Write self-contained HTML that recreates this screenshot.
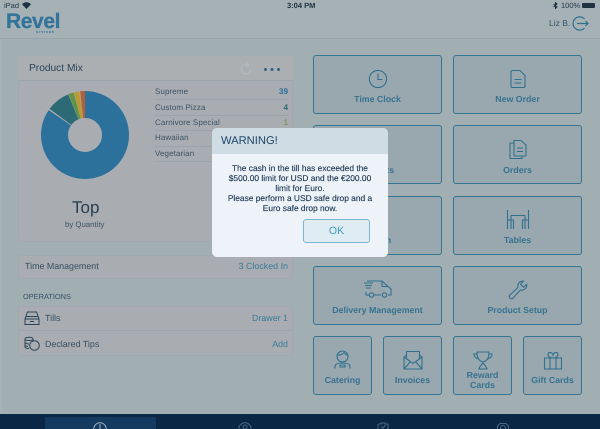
<!DOCTYPE html>
<html><head><meta charset="utf-8">
<style>
html,body{margin:0;padding:0}
body{width:600px;height:429px;overflow:hidden;position:relative;background:#a1afb3;font-family:"Liberation Sans",sans-serif;color:#2c4a63;text-rendering:geometricPrecision}
#w{position:absolute;left:0;top:0;width:600px;height:429px}
.a{position:absolute;white-space:nowrap}
.b{position:absolute;box-sizing:border-box;border:1.3px solid #367493;border-radius:3px;background:#99a8ae;color:#377291;font-size:8.8px;font-weight:bold;text-align:center}
.b span{position:absolute;left:0;right:0;line-height:10px}
.b svg{position:absolute;left:50%;fill:none;stroke:#31708f;stroke-width:1.1}
.card{position:absolute;box-sizing:border-box;background:#a9adb1;border:1px solid #a0a9ae;border-radius:3px}
.r{font-size:8px;color:#3b5366;letter-spacing:.1px}
.v{position:absolute;text-align:right;white-space:nowrap}
.hl{position:absolute;left:155px;width:134px;height:1px;background:#9aa4a9}
</style></head><body><div id="w">
<div class="a" style="left:0;top:0;width:600px;height:38px;background:#a5b1b5;border-bottom:1px solid #97a5aa"></div>
<div class="a" style="left:0;top:39px;width:2px;height:375px;background:#a6b2b6"></div>
<div class="a" style="left:4px;top:1px;font-size:7.5px;line-height:9px;color:#23384a">iPad</div>
<svg class="a" style="left:22px;top:2px" width="9" height="7" viewBox="0 0 9 7"><path d="M4.5 7L0 2.2C2.5-.4 6.5-.4 9 2.2Z" fill="#1f3242"/></svg>
<div class="a" style="left:287px;top:1px;font-size:7.5px;line-height:9px;font-weight:bold;color:#1f3242">3:04 PM</div>
<svg class="a" style="left:553px;top:2px" width="5" height="7" viewBox="0 0 5 7" fill="none" stroke="#1f3242" stroke-width="1"><path d="M.5 2L4 5L2.5 6.5V.5L4 2L.5 5"/></svg>
<div class="a" style="left:561px;top:1px;font-size:7.5px;line-height:9px;color:#23384a">100%</div>
<div class="a" style="left:582px;top:3px;width:13px;height:5px;background:#1f3242;border-radius:1px"></div>
<div class="a" style="left:6px;top:10px;font-size:21px;line-height:23px;font-weight:bold;color:#33749a;letter-spacing:-.4px;-webkit-text-stroke:.3px #33749a">Revel</div>
<div class="a" style="left:36px;top:30px;font-size:3px;line-height:4px;font-weight:bold;letter-spacing:.6px;color:#33749a">SYSTEMS</div>
<div class="a" style="left:549px;top:18px;font-size:8.5px;line-height:11px;color:#3b566c">Liz B.</div>
<svg class="a" style="left:572px;top:15px" width="17" height="17" viewBox="0 0 17 17" fill="none" stroke="#31708f" stroke-width="1.2"><path d="M12.5 4A6.6 6.6 0 1 0 12.5 13M5 8.5H16M13.5 6L16 8.5L13.5 11"/></svg>

<div class="card" style="left:18px;top:56px;width:275px;height:186px"></div>
<div class="a" style="left:18px;top:56px;width:275px;height:25px;background:#acafb2;border-bottom:1px solid #9ca6ab;border-radius:3px 3px 0 0;box-sizing:border-box"></div>
<div class="a" style="left:29px;top:62px;font-size:10.2px;line-height:13px;color:#2b4559">Product Mix</div>
<svg class="a" style="left:240px;top:62px" width="12" height="13" viewBox="0 0 12 13" fill="none" stroke="#b2bbbf" stroke-width="1"><path d="M8.5 3A4.8 4.8 0 1 0 10.8 7M6.5 .5L8.8 3L6 4.5"/></svg>
<div class="a" style="left:264px;top:67.5px;width:3.2px;height:3.2px;border-radius:2px;background:#2b6485;box-shadow:6.5px 0 #2b6485,13px 0 #2b6485"></div>
<svg class="a" style="left:41px;top:91px" width="88" height="88" viewBox="0 0 88 88" fill="none">
<g transform="rotate(-90 44 44)" stroke-width="27">
<circle cx="44" cy="44" r="30.5" pathLength="360" stroke="#2c709c" stroke-dasharray="304.5 55.5"/>
<circle cx="44" cy="44" r="30.5" pathLength="360" stroke="#2c6a75" stroke-dasharray="31 329" stroke-dashoffset="-306.5"/>
<circle cx="44" cy="44" r="30.5" pathLength="360" stroke="#629448" stroke-dasharray="7 353" stroke-dashoffset="-338"/>
<circle cx="44" cy="44" r="30.5" pathLength="360" stroke="#bb9a36" stroke-dasharray="7 353" stroke-dashoffset="-345.5"/>
<circle cx="44" cy="44" r="30.5" pathLength="360" stroke="#b2603a" stroke-dasharray="6.5 353.5" stroke-dashoffset="-353.5"/>
</g></svg>
<div class="r a" style="left:155px;top:87px;line-height:10px">Supreme</div>
<div class="r a" style="left:155px;top:102.5px;line-height:10px">Custom Pizza</div>
<div class="r a" style="left:155px;top:118px;line-height:10px">Carnivore Special</div>
<div class="r a" style="left:155px;top:133px;line-height:10px">Hawaiian</div>
<div class="r a" style="left:155px;top:149px;line-height:10px">Vegetarian</div>
<div class="v" style="right:312px;top:87px;font-size:8.2px;line-height:10px;font-weight:bold;color:#2c709c">39</div>
<div class="v" style="right:312px;top:102.5px;font-size:8.2px;line-height:10px;font-weight:bold;color:#2c6a75">4</div>
<div class="v" style="right:312px;top:118px;font-size:8.2px;line-height:10px;font-weight:bold;color:#7a9a58">1</div>
<div class="hl" style="top:99px"></div><div class="hl" style="top:115px"></div><div class="hl" style="top:130px"></div><div class="hl" style="top:146px"></div><div class="hl" style="top:161px"></div>
<div class="a" style="left:72px;top:197px;font-size:17px;line-height:21px;color:#2a3f52">Top</div>
<div class="a" style="left:65px;top:220px;font-size:7.8px;line-height:10px;color:#3b5366">by Quantity</div>

<div class="card" style="left:18px;top:255px;width:275px;height:24px"></div>
<div class="a" style="left:25px;top:261px;font-size:8.9px;line-height:11px;color:#374f63">Time Management</div>
<div class="v" style="right:312px;top:261px;font-size:8.9px;line-height:11px;color:#3a7a9b">3 Clocked In</div>
<div class="a" style="left:23px;top:292px;font-size:7.4px;line-height:10px;color:#374f63">OPERATIONS</div>
<div class="card" style="left:18px;top:306px;width:275px;height:50px"></div>
<div class="a" style="left:19px;top:330px;width:273px;height:1px;background:#9ca6ab"></div>
<svg class="a" style="left:24px;top:311px" width="16" height="15" viewBox="0 0 16 15" fill="none" stroke="#2b4559" stroke-width="1"><path d="M3.5 1H12.5L15 8V13.5H1V8ZM1 8H15M2.5 5.5H13.5"/><path d="M6 10.5H10"/></svg>
<svg class="a" style="left:24px;top:336px" width="16" height="15" viewBox="0 0 16 15" fill="none" stroke="#2b4559" stroke-width="1"><path d="M1 3C1 .6 9 .6 9 3M1 3V11C1 12 3 12.5 5 12.5M1 3C1 5 9 5 9 3V5M1 6C1 7.5 4 8 5 8M1 9C1 10 3 10.5 4 10.5"/><circle cx="10.5" cy="9.5" r="4.8"/></svg>
<div class="a" style="left:45px;top:313px;font-size:8.9px;line-height:11px;color:#374f63">Tills</div>
<div class="a" style="left:45px;top:339px;font-size:8.9px;line-height:11px;color:#374f63">Declared Tips</div>
<div class="v" style="right:312px;top:313px;font-size:8.9px;line-height:11px;color:#3a7a9b">Drawer 1</div>
<div class="v" style="right:312px;top:339px;font-size:8.9px;line-height:11px;color:#3a7a9b">Add</div>

<div class="b" style="left:313px;top:55px;width:129px;height:59px"><svg style="margin-left:-10px;top:13px" width="20" height="20" viewBox="0 0 20 20"><circle cx="10" cy="10" r="8.6"/><path d="M10 4.5V10.5H14.5"/></svg><span style="top:38px">Time Clock</span></div>
<div class="b" style="left:453px;top:55px;width:129px;height:59px"><svg style="margin-left:-9px;top:13px" width="18" height="20" viewBox="0 0 18 20"><path d="M3 1.5H11L16 6.5V17A1.5 1.5 0 0 1 14.5 18.5H3.5A1.5 1.5 0 0 1 2 17V2.5Z"/><path d="M5.5 10.5H12.5M5.5 14H12.5"/></svg><span style="top:38px">New Order</span></div>
<div class="b" style="left:313px;top:125px;width:129px;height:59px"><span style="top:38.5px">Reports</span></div>
<div class="b" style="left:453px;top:125px;width:129px;height:59px"><svg style="margin-left:-10px;top:12px" width="20" height="22" viewBox="0 0 20 22"><path d="M6 2.5H13L18 7V17A1 1 0 0 1 17 18H7A1 1 0 0 1 6 17Z"/><path d="M6 5H3A1 1 0 0 0 2 6V19.5A1 1 0 0 0 3 20.5H14V18"/><path d="M9 10H15M9 13.5H15"/></svg><span style="top:38.5px">Orders</span></div>
<div class="b" style="left:313px;top:196px;width:129px;height:59px"><span style="top:38px">Admin</span></div>
<div class="b" style="left:453px;top:196px;width:129px;height:59px"><svg style="margin-left:-12px;top:12px" width="24" height="21" viewBox="0 0 24 21"><path d="M1.5 1V20M22.5 1V20M1.5 11H7.5V20M22.5 11H16.5V20M5 6.5H19M5 6.5V20M19 6.5V20M12 6.5V7"/></svg><span style="top:38px">Tables</span></div>
<div class="b" style="left:313px;top:266px;width:129px;height:59px"><svg style="margin-left:-14px;top:13px" width="28" height="18" viewBox="0 0 28 18"><path d="M3 1H18L24 6.5L27 9V15H24M17 15H10M5 15H2V12M18 1V6.5H24"/><circle cx="7.5" cy="15" r="2.2"/><circle cx="20.5" cy="15" r="2.2"/><path d="M0 3H9M1 5.5H8M2 8H7"/></svg><span style="top:38px">Delivery Management</span></div>
<div class="b" style="left:453px;top:266px;width:129px;height:59px"><svg style="margin-left:-10px;top:13px" width="20" height="20" viewBox="0 0 20 20"><path d="M1.5 15.5L10 7.5C9 4 11.5 .8 15.5 1.2L12.5 4.2L15.5 7.2L18.8 4.2C19.2 8 16 11 12.5 10L4.5 18.5C3 19.5 .5 17.5 1.5 15.5Z"/></svg><span style="top:38px">Product Setup</span></div>
<div class="b" style="left:313px;top:336px;width:59px;height:59px"><svg style="margin-left:-8.5px;top:13px" width="17" height="20" viewBox="0 0 17 20"><circle cx="8.5" cy="6.5" r="5.5"/><path d="M3.5 5C6 5.5 9 4 10 2.5C11 4 12.5 5 13.5 5M1 18.5V16.5C1 14 4 13 8.5 13C13 13 16 14 16 16.5V18.5"/><path d="M6 15H11V17H6Z"/></svg><span style="top:38px">Catering</span></div>
<div class="b" style="left:383px;top:336px;width:59px;height:59px"><svg style="margin-left:-10px;top:13px" width="20" height="20" viewBox="0 0 20 20"><path d="M1 7L3.5 5V1.5H16.5V5L19 7V19H1ZM1 7L10 13.5L19 7M1 19L7.5 11.5M19 19L12.5 11.5M3.5 5V9M16.5 5V9"/></svg><span style="top:38px">Invoices</span></div>
<div class="b" style="left:453px;top:336px;width:59px;height:59px"><svg style="margin-left:-10px;top:14px" width="20" height="19" viewBox="0 0 20 19"><path d="M4 1H16C16 6 15 9.5 10 11C5 9.5 4 6 4 1ZM4 3H1C1 6 2.5 7 6 8M16 3H19C19 6 17.5 7 14 8M10 11C10 13 6.5 15 6 18H14C13.5 15 10 13 10 11Z"/></svg><span style="top:33px">Reward<br>Cards</span></div>
<div class="b" style="left:523px;top:336px;width:59px;height:59px"><svg style="margin-left:-10px;top:14px" width="20" height="19" viewBox="0 0 20 19"><path d="M1.5 7H18.5V18H1.5ZM7 7V18M13 7V18M10 7C7 7 5 5.5 5 3.5C5 .8 9 .5 10 4C11 .5 15 .8 15 3.5C15 5.5 13 7 10 7Z"/></svg><span style="top:38px">Gift Cards</span></div>

<div class="a" style="left:0;top:414px;width:600px;height:15px;background:#0a2745"></div>
<div class="a" style="left:45px;top:417px;width:111px;height:12px;background:#153a60;border-radius:2px 2px 0 0"></div>
<svg class="a" style="left:93px;top:422px" width="14" height="7" viewBox="0 0 14 7" fill="none" stroke="#9fb2c2" stroke-width="1"><circle cx="7" cy="7" r="6.2"/><path d="M7 2V7"/></svg>
<svg class="a" style="left:238px;top:422px" width="14" height="7" viewBox="0 0 14 7" fill="none" stroke="#47698a" stroke-width="1"><circle cx="7" cy="7" r="6.2"/><circle cx="7" cy="5" r="2"/></svg>
<svg class="a" style="left:377px;top:422px" width="12" height="7" viewBox="0 0 12 7" fill="none" stroke="#47698a" stroke-width="1"><path d="M1 2H4V1H8V2H11V7M1 2V7M4 4.5L6 6L8.5 3"/></svg>
<svg class="a" style="left:496px;top:422px" width="14" height="7" viewBox="0 0 14 7" fill="none" stroke="#47698a" stroke-width="1"><path d="M1.5 7V4L4 1.5H10L12.5 4V7"/><circle cx="7" cy="6" r="2.5"/></svg>

<div class="a" style="left:212px;top:128px;width:176px;height:129px;background:#eef3fa;border-radius:5px;overflow:hidden;white-space:normal">
<div style="height:26px;background:#cfdce3"></div>
<div class="a" style="left:9px;top:6px;font-size:11.2px;line-height:15px;color:#21476b">WARNING!</div>
<div class="a" style="left:0;top:35px;width:176px;text-align:center;font-size:8.4px;line-height:10px;color:#1f3a56;white-space:normal;-webkit-text-stroke:.15px #1f3a56">The cash in the till has exceeded the<br>$500.00 limit for USD and the &#8364;200.00<br>limit for Euro.<br>Please perform a USD safe drop and a<br>Euro safe drop now.</div>
<div class="a" style="left:91px;top:91px;width:67px;height:24px;box-sizing:border-box;background:#e0ecf3;border:1px solid #7fb6cf;border-radius:3px;text-align:center;font-size:10.5px;line-height:22px;color:#3c9cc0">OK</div>
</div>
</div></body></html>
